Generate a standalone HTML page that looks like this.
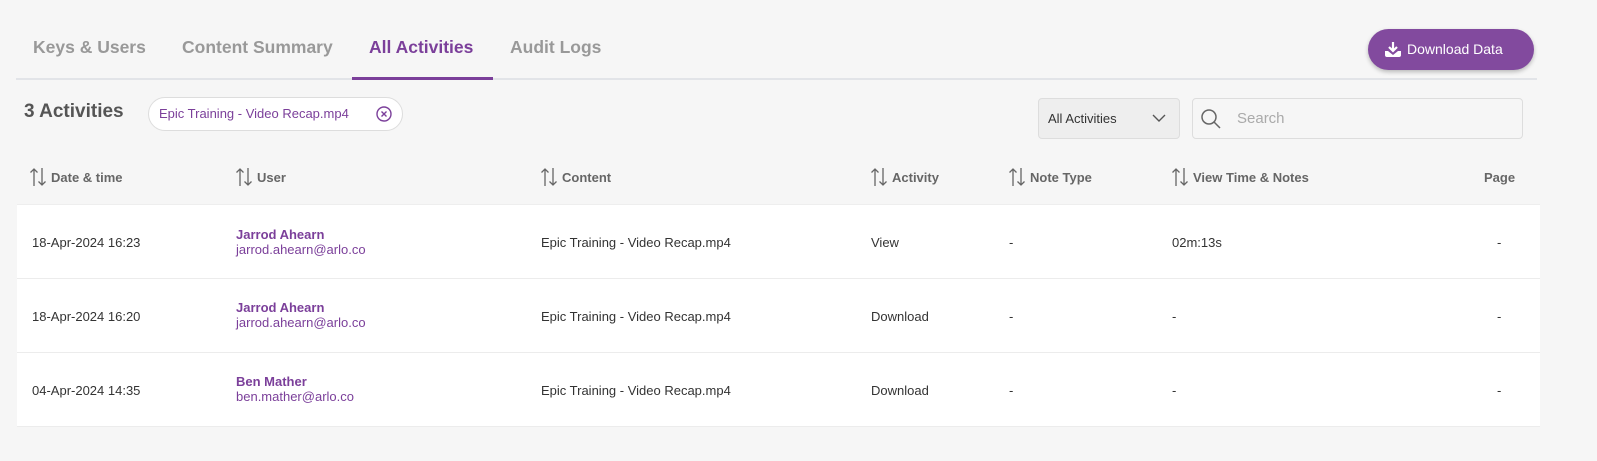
<!DOCTYPE html>
<html><head><meta charset="utf-8"><style>
*{box-sizing:border-box;margin:0;padding:0}
body{width:1597px;height:461px;background:#f6f6f6;font-family:"Liberation Sans",Arial,sans-serif;position:relative;overflow:hidden;color:#333}
.a{position:absolute;white-space:nowrap}
.tab{top:37px;font-size:17.5px;font-weight:bold;color:#999}
.hd{top:167px;font-size:13px;font-weight:bold;color:#666}
.hd svg{vertical-align:-5px;margin-right:4px}
.row{position:absolute;left:17px;width:1523px;height:74px;background:#fff;border-bottom:1px solid #ececec}
.c{position:absolute;font-size:13px;color:#333;white-space:nowrap}
.u b{display:block;color:#7b3f9a;font-size:13px}
.u span{display:block;color:#7b3f9a;font-size:13px}
</style></head><body>
<div class="a tab" style="left:33px">Keys &amp; Users</div>
<div class="a tab" style="left:182px">Content Summary</div>
<div class="a tab" style="left:369px;color:#7b3f9a">All Activities</div>
<div class="a tab" style="left:510px">Audit Logs</div>
<div class="a" style="left:16px;top:78px;width:1521px;height:2px;background:#e2e4e8"></div>
<div class="a" style="left:352px;top:77px;width:141px;height:3px;background:#7b3f9a"></div>
<div class="a" style="left:1368px;top:29px;width:166px;height:41px;border-radius:21px;background:#824a9e;box-shadow:0 2px 4px rgba(0,0,0,.25);color:#fff;font-size:14px;line-height:41px;padding-left:39px">Download Data
<svg style="position:absolute;left:16px;top:12px" width="18" height="17" viewBox="0 0 18 17"><path d="M9 1v9M5 6l4 4 4-4" stroke="#fff" stroke-width="2.2" fill="none"/><path d="M1 10v4a2 2 0 0 0 2 2h12a2 2 0 0 0 2-2v-4h-3l-5 4-5-4z" fill="#fff"/></svg></div>
<div class="a" style="left:24px;top:101px;font-size:19px;font-weight:bold;color:#555">3 Activities</div>
<div class="a" style="left:148px;top:97px;width:255px;height:34px;border:1px solid #ddd;border-radius:17px;background:#fff;color:#7b3f9a;font-size:13px;line-height:32px;padding-left:10px">Epic Training - Video Recap.mp4
<svg style="position:absolute;left:227px;top:8px" width="16" height="16" viewBox="0 0 16 16"><circle cx="8" cy="8" r="7" stroke="#7b3f9a" stroke-width="1.4" fill="none"/><path d="M5.5 5.5l5 5M10.5 5.5l-5 5" stroke="#7b3f9a" stroke-width="1.4"/></svg></div>
<div class="a" style="left:1038px;top:98px;width:142px;height:41px;background:#eee;border:1px solid #ddd;border-radius:4px;font-size:13px;line-height:39px;padding-left:9px;color:#333">All Activities
<svg style="position:absolute;left:113px;top:15px" width="14" height="9" viewBox="0 0 14 9"><path d="M1 1l6 6 6-6" stroke="#555" stroke-width="1.4" fill="none"/></svg></div>
<div class="a" style="left:1192px;top:98px;width:331px;height:41px;background:#f6f6f6;border:1px solid #ddd;border-radius:4px;font-size:15px;line-height:39px;padding-left:44px;color:#aaa">Search
<svg style="position:absolute;left:7px;top:9px" width="22" height="22" viewBox="0 0 22 22"><circle cx="9" cy="9" r="7" stroke="#666" stroke-width="1.5" fill="none"/><path d="M14 14l6 6" stroke="#666" stroke-width="1.5"/></svg></div>
<div class="a hd" style="left:29px"><svg width="18" height="20" viewBox="0 0 18 20"><path d="M5 19V2M1.5 5.5l3.5-3.5 3.5 3.5M13 1v17M9.5 14.5l3.5 3.5 3.5-3.5" stroke="#666" stroke-width="1.3" fill="none"/></svg>Date &amp; time</div>
<div class="a hd" style="left:235px"><svg width="18" height="20" viewBox="0 0 18 20"><path d="M5 19V2M1.5 5.5l3.5-3.5 3.5 3.5M13 1v17M9.5 14.5l3.5 3.5 3.5-3.5" stroke="#666" stroke-width="1.3" fill="none"/></svg>User</div>
<div class="a hd" style="left:540px"><svg width="18" height="20" viewBox="0 0 18 20"><path d="M5 19V2M1.5 5.5l3.5-3.5 3.5 3.5M13 1v17M9.5 14.5l3.5 3.5 3.5-3.5" stroke="#666" stroke-width="1.3" fill="none"/></svg>Content</div>
<div class="a hd" style="left:870px"><svg width="18" height="20" viewBox="0 0 18 20"><path d="M5 19V2M1.5 5.5l3.5-3.5 3.5 3.5M13 1v17M9.5 14.5l3.5 3.5 3.5-3.5" stroke="#666" stroke-width="1.3" fill="none"/></svg>Activity</div>
<div class="a hd" style="left:1008px"><svg width="18" height="20" viewBox="0 0 18 20"><path d="M5 19V2M1.5 5.5l3.5-3.5 3.5 3.5M13 1v17M9.5 14.5l3.5 3.5 3.5-3.5" stroke="#666" stroke-width="1.3" fill="none"/></svg>Note Type</div>
<div class="a hd" style="left:1171px"><svg width="18" height="20" viewBox="0 0 18 20"><path d="M5 19V2M1.5 5.5l3.5-3.5 3.5 3.5M13 1v17M9.5 14.5l3.5 3.5 3.5-3.5" stroke="#666" stroke-width="1.3" fill="none"/></svg>View Time &amp; Notes</div>
<div class="a hd" style="left:1484px;top:170px">Page</div>
<div class="a" style="left:17px;top:204px;width:1523px;height:1px;background:#eee"></div>

<div class="row" style="top:205px">
<div class="c" style="left:15px;top:30px">18-Apr-2024 16:23</div>
<div class="c u" style="left:219px;top:22px"><b>Jarrod Ahearn</b><span>jarrod.ahearn@arlo.co</span></div>
<div class="c" style="left:524px;top:30px">Epic Training - Video Recap.mp4</div>
<div class="c" style="left:854px;top:30px">View</div>
<div class="c" style="left:992px;top:30px">-</div>
<div class="c" style="left:1155px;top:30px">02m:13s</div>
<div class="c" style="left:1480px;top:30px">-</div>
</div>
<div class="row" style="top:279px">
<div class="c" style="left:15px;top:30px">18-Apr-2024 16:20</div>
<div class="c u" style="left:219px;top:21px"><b>Jarrod Ahearn</b><span>jarrod.ahearn@arlo.co</span></div>
<div class="c" style="left:524px;top:30px">Epic Training - Video Recap.mp4</div>
<div class="c" style="left:854px;top:30px">Download</div>
<div class="c" style="left:992px;top:30px">-</div>
<div class="c" style="left:1155px;top:30px">-</div>
<div class="c" style="left:1480px;top:30px">-</div>
</div>
<div class="row" style="top:353px">
<div class="c" style="left:15px;top:30px">04-Apr-2024 14:35</div>
<div class="c u" style="left:219px;top:21px"><b>Ben Mather</b><span>ben.mather@arlo.co</span></div>
<div class="c" style="left:524px;top:30px">Epic Training - Video Recap.mp4</div>
<div class="c" style="left:854px;top:30px">Download</div>
<div class="c" style="left:992px;top:30px">-</div>
<div class="c" style="left:1155px;top:30px">-</div>
<div class="c" style="left:1480px;top:30px">-</div>
</div>
</body></html>
